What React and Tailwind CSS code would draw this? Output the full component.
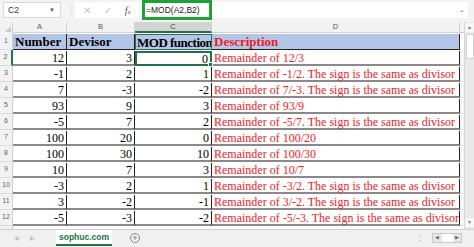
import React from "react";

const rows = [
  [12, 3, 0, "Remainder of 12/3"],
  [-1, 2, 1, "Remainder of -1/2. The sign is the same as divisor"],
  [7, -3, -2, "Remainder of 7/-3. The sign is the same as divisor"],
  [93, 9, 3, "Remainder of 93/9"],
  [-5, 7, 2, "Remainder of -5/7. The sign is the same as divisor"],
  [100, 20, 0, "Remainder of 100/20"],
  [100, 30, 10, "Remainder of 100/30"],
  [10, 7, 3, "Remainder of 10/7"],
  [-3, 2, 1, "Remainder of -3/2. The sign is the same as divisor"],
  [3, -2, -1, "Remainder of 3/-2. The sign is the same as divisor"],
  [-5, -3, -2, "Remainder of -5/-3. The sign is the same as divisor"],
];

const ui = { fontFamily: '"Liberation Sans", Arial, sans-serif' };
const serif = { fontFamily: '"Liberation Serif", "Times New Roman", serif' };

function TopBar() {
  return (
    <div className="relative flex h-[22px] items-start pt-[2px]" style={ui}>
      <div className="ml-[3px] flex h-[16px] w-[58px] items-center justify-between border border-[#dadada] bg-white pl-[4px] pr-[5px] text-[8.5px] text-[#333]">
        <span>C2</span>
        <span className="text-[6px] text-[#555]">▼</span>
      </div>
      <div className="ml-[6px] flex h-[16px] w-[4px] items-center text-[9px] leading-none text-[#bdbdbd]">⋮</div>
      <div className="ml-[4px] flex h-[16px] w-[64px] items-center justify-around bg-white px-[2px] text-[10px] text-[#c4c4c4]">
        <span>✕</span>
        <span>✓</span>
        <span className="italic text-[#555]" style={serif}>f<span className="text-[7px]">x</span></span>
      </div>
      <div className="ml-[1px] flex h-[16px] w-[328px] items-center justify-between bg-white pl-[6px] pr-[3px] text-[8.5px] text-[#222]">
        <span>=MOD(A2,B2)</span>
        <span className="text-[7px] text-[#666]">⌄</span>
      </div>
      <div className="absolute left-[142px] top-0 h-[20px] w-[70px] border-[3px] border-[#1fa13a]" />
    </div>
  );
}

function ColHeaders() {
  const cols = [
    ["A", "w-[54px]"],
    ["B", "w-[68px]"],
    ["C", "w-[77px]"],
    ["D", "w-[248px]"],
  ];
  return (
    <div className="flex h-[11px] bg-[#f2f2f2] text-[7.5px] text-[#555]" style={ui}>
      <div className="relative w-[13px] border-r border-[#d0d0d0]">
        <div className="absolute bottom-[1px] right-[1px] h-0 w-0 border-b-[6px] border-l-[6px] border-b-[#c8c8c8] border-l-transparent" />
      </div>
      {cols.map(([c, w]) => (
        <div
          key={c}
          className={`${w} flex items-center justify-center border-r border-[#d0d0d0] ${
            c === "C" ? "border-b-2 border-b-[#217346] bg-[#d3d3d3] text-[#1d5b38]" : "border-b border-b-[#d0d0d0]"
          }`}
        >
          {c}
        </div>
      ))}
      <div className="flex-1 border-b border-[#d0d0d0]" />
    </div>
  );
}

function RowNum({ n, h }) {
  return (
    <div
      className={`${h} flex w-[13px] items-center justify-center border-b border-[#dcdcdc] bg-[#f2f2f2] text-[7px] ${
        n === 2 ? "border-r-2 border-r-[#217346] bg-[#d3d3d3] text-[#217346]" : "border-r border-r-[#d0d0d0] text-[#666]"
      }`}
      style={ui}
    >
      {n}
    </div>
  );
}

function HeaderRow() {
  return (
    <div className="flex h-[17px]">
      <RowNum n={1} h="h-[17px]" />
      <div className="flex whitespace-nowrap pt-[1px] text-[13px] font-bold leading-none" style={serif}>
        <div className="flex w-[54px] items-center border-b border-r border-[#222] bg-[#b4c6e7] pl-[2px]">Number</div>
        <div className="flex w-[68px] items-center border-b border-r border-[#222] bg-[#b4c6e7] pl-[2px]">Devisor</div>
        <div className="flex w-[77px] items-center overflow-hidden border border-[#2f6e58] bg-[#b4c6e7] pl-[1px] tracking-[-0.5px]">MOD function</div>
        <div className="flex w-[248px] items-center border-b border-r border-[#222] bg-[#b4c6e7] pl-[2px] text-[#ee1c25]">Description</div>
      </div>
    </div>
  );
}

function DataRow({ r, i }) {
  const n = i + 2;
  const sel = n === 2;
  return (
    <div className="flex h-[16px]">
      <RowNum n={n} h="h-[16px]" />
      <div className="flex pt-[1px] text-[12px] leading-none text-black" style={serif}>
        <div className="flex w-[54px] items-center justify-end border-b-2 border-r border-b-[#8a8a8a] border-r-[#222] bg-white pr-[2px]">{r[0]}</div>
        <div className="flex w-[68px] items-center justify-end border-b-2 border-r border-b-[#8a8a8a] border-r-[#222] bg-white pr-[2px]">{r[1]}</div>
        <div
          className={`relative flex w-[77px] items-center justify-end bg-white pr-[2px] ${
            sel ? "border-2 border-[#217346]" : "border-b-2 border-r border-b-[#8a8a8a] border-r-[#222]"
          }`}
        >
          {r[2]}
          {sel && <div className="absolute -bottom-[3px] -right-[3px] h-[5px] w-[5px] border border-white bg-[#217346]" />}
        </div>
        <div className="flex w-[248px] items-center whitespace-nowrap border-b-2 border-r border-b-[#8a8a8a] border-r-[#222] bg-white pl-[2px] text-[#ee1c25]">
          {r[3]}
        </div>
      </div>
      <div className="flex-1 border-b border-[#e2e2e2] bg-[#f7f7f7]" />
    </div>
  );
}

function VScroll() {
  return (
    <div className="flex h-full w-[10px] flex-col items-center border-l border-[#d6d6d6] bg-[#e9e9e9]">
      <div className="mt-[1px] flex h-[9px] w-[9px] items-center justify-center bg-[#f7f7f7] text-[5px] text-[#777]">▲</div>
      <div className="mt-[2px] h-[25px] w-[8px] border border-[#d0d0d0] bg-white" />
      <div className="flex-1" />
      <div className="mb-[2px] flex h-[9px] w-[9px] items-center justify-center bg-[#f7f7f7] text-[5px] text-[#777]">▼</div>
    </div>
  );
}

function TabBar() {
  return (
    <div className="flex h-[18px] items-start border-t border-[#cfcfcf] bg-[#f0f0f0]" style={ui}>
      <div className="flex h-[16px] w-[56px] items-center gap-[11px] pl-[14px] text-[6px] text-[#c2c2c2]">
        <span>◀</span>
        <span>▶</span>
      </div>
      <div className="flex h-[16px] w-[56px] flex-col items-center justify-center border-b-2 border-[#217346] bg-white text-[8.5px] font-bold text-[#217346]">
        sophuc.com
      </div>
      <div className="ml-[18px] flex h-[16px] items-center">
        <div className="flex h-[10px] w-[10px] items-center justify-center rounded-full border border-[#8a8a8a] text-[9px] leading-none text-[#777]">+</div>
      </div>
      <div className="flex-1" />
      <div className="flex h-[16px] items-center text-[8px] text-[#aaa]">⋮</div>
      <div className="ml-[8px] mr-[12px] flex h-[16px] items-center">
        <div className="flex h-[10px] w-[30px] items-center justify-between border border-[#c8c8c8] bg-[#e6e6e6] px-[2px] text-[5px] text-[#666]">
          <span>◀</span>
          <span className="h-[8px] w-[11px] bg-white" />
          <span>▶</span>
        </div>
      </div>
    </div>
  );
}

export default function App() {
  return (
    <div className="h-[247px] w-[474px] overflow-hidden bg-[#f3f3f3]">
      <TopBar />
      <div className="flex h-[207px]">
        <div className="flex w-[464px] flex-col bg-white">
          <ColHeaders />
          <HeaderRow />
          {rows.map((r, i) => (
            <DataRow key={i} r={r} i={i} />
          ))}
          <div className="flex flex-1">
            <div className="w-[13px] border-r border-[#d0d0d0] bg-[#f2f2f2]" />
            <div className="flex-1 bg-white" />
          </div>
        </div>
        <VScroll />
      </div>
      <TabBar />
    </div>
  );
}
